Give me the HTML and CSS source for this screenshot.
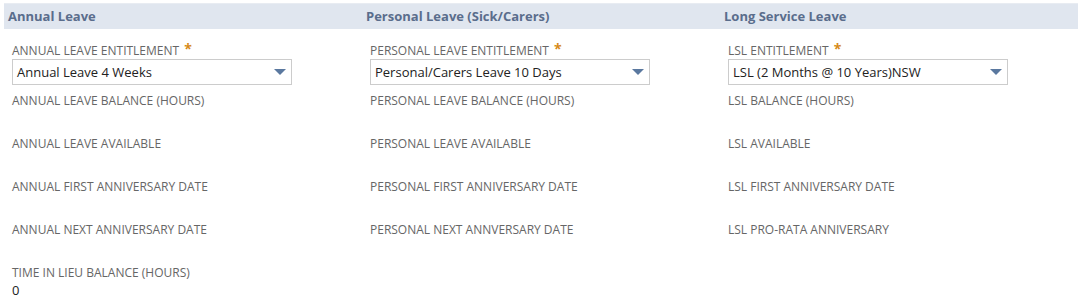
FILE: index.html
```html
<!DOCTYPE html>
<html lang="en">
<head>
    <title>Leave</title>
    <meta charset="utf-8">
    <link rel="stylesheet" href="styles.css">
</head>
<body>

<div class="leaveForm">
    <div class="sectionHeader">
        <div class="col">Annual Leave</div>
        <div class="col">Personal Leave (Sick/Carers)</div>
        <div class="col">Long Service Leave</div>
    </div>

    <div class="sectionBody">
        <div class="col">
            <div class="field first">
                <label>Annual Leave Entitlement <span class="req">*</span></label>
                <div class="select">Annual Leave 4 Weeks<span class="arrow"></span></div>
            </div>
            <div class="field"><label>Annual Leave Balance (Hours)</label><div class="value"></div></div>
            <div class="field"><label>Annual Leave Available</label><div class="value"></div></div>
            <div class="field"><label>Annual First Anniversary Date</label><div class="value"></div></div>
            <div class="field"><label>Annual Next Anniversary Date</label><div class="value"></div></div>
            <div class="field"><label>Time in Lieu Balance (Hours)</label><div class="value">0</div></div>
        </div>

        <div class="col">
            <div class="field first">
                <label>Personal Leave Entitlement <span class="req">*</span></label>
                <div class="select">Personal/Carers Leave 10 Days<span class="arrow"></span></div>
            </div>
            <div class="field"><label>Personal Leave Balance (Hours)</label><div class="value"></div></div>
            <div class="field"><label>Personal Leave Available</label><div class="value"></div></div>
            <div class="field"><label>Personal First Anniversary Date</label><div class="value"></div></div>
            <div class="field"><label>Personal Next Annversary Date</label><div class="value"></div></div>
        </div>

        <div class="col">
            <div class="field first">
                <label>LSL Entitlement <span class="req">*</span></label>
                <div class="select">LSL (2 Months @ 10 Years)NSW<span class="arrow"></span></div>
            </div>
            <div class="field"><label>LSL Balance (Hours)</label><div class="value"></div></div>
            <div class="field"><label>LSL Available</label><div class="value"></div></div>
            <div class="field"><label>LSL First Anniversary Date</label><div class="value"></div></div>
            <div class="field"><label>LSL Pro-Rata Anniversary</label><div class="value"></div></div>
        </div>
    </div>
</div>

</body>
</html>
```

FILE: styles.css
```css
/* Reset
---------------------------------------------------------------- */
html, body {
    margin: 0;
    padding: 0;
    }
body {
    font-family: "Open Sans", Arial, sans-serif;
    color: #222;
    background: #fff;
    }

/* Layout
---------------------------------------------------------------- */
.leaveForm {
    width: 1074px;
    padding: 3px 0 0 4px;
    }
.sectionHeader, .sectionBody {
    display: grid;
    grid-template-columns: 358px 358px 358px;
    }
.sectionHeader {
    height: 26px;
    background: #e0e6ef;
    border-top: 1px solid #e8ecf2;
    box-sizing: border-box;
    }
.sectionHeader .col {
    padding-left: 4px;
    font-size: 13px;
    font-weight: bold;
    line-height: 25px;
    color: #5a6d8c;
    }
.sectionBody {
    padding-top: 12px;
    }
.sectionBody .col {
    padding-left: 8px;
    }

/* Fields
---------------------------------------------------------------- */
.field {
    height: 43px;
    }
.field.first {
    height: 52px;
    }
label {
    display: block;
    font-size: 12px;
    line-height: 16px;
    text-transform: uppercase;
    color: #666;
    }
.field.first label {
    padding-top: 2px;
    }
.req {
    color: #d68a1a;
    font-size: 14px;
    font-weight: bold;
    line-height: 10px;
    vertical-align: 1px;
    margin-left: 2px;
    }
.value {
    font-size: 13px;
    line-height: 18px;
    color: #222;
    }
.select {
    position: relative;
    width: 280px;
    height: 26px;
    box-sizing: border-box;
    border: 1px solid #ccc;
    padding-left: 4px;
    font-size: 13px;
    line-height: 24px;
    color: #222;
    }
.arrow {
    position: absolute;
    right: 5px;
    top: 9px;
    width: 0;
    height: 0;
    border-left: 6px solid transparent;
    border-right: 6px solid transparent;
    border-top: 6px solid #5a789f;
    }
```
